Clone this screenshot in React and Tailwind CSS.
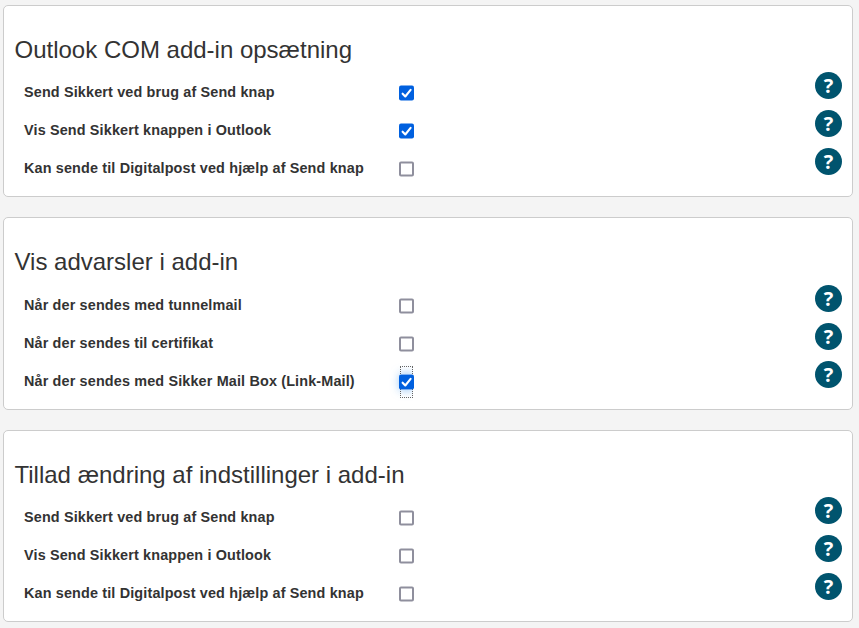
import { useState } from 'react';

const sections = [
  {
    title: 'Outlook COM add-in opsætning',
    cardClass: 'h-[192px]',
    headClass: 'h-[68px]',
    rows: [
      { label: 'Send Sikkert ved brug af Send knap', checked: true },
      { label: 'Vis Send Sikkert knappen i Outlook', checked: true },
      { label: 'Kan sende til Digitalpost ved hjælp af Send knap', checked: false },
    ],
  },
  {
    title: 'Vis advarsler i add-in',
    cardClass: 'h-[193px]',
    headClass: 'h-[69px]',
    rows: [
      { label: 'Når der sendes med tunnelmail', checked: false },
      { label: 'Når der sendes til certifikat', checked: false },
      { label: 'Når der sendes med Sikker Mail Box (Link-Mail)', checked: true, focused: true },
    ],
  },
  {
    title: 'Tillad ændring af indstillinger i add-in',
    cardClass: 'h-[192px]',
    headClass: 'h-[68px]',
    rows: [
      { label: 'Send Sikkert ved brug af Send knap', checked: false },
      { label: 'Vis Send Sikkert knappen i Outlook', checked: false },
      { label: 'Kan sende til Digitalpost ved hjælp af Send knap', checked: false },
    ],
  },
];

function Checkbox({ defaultChecked, focused, label }) {
  const [checked, setChecked] = useState(defaultChecked);

  return (
    <button
      role="checkbox"
      aria-checked={checked}
      aria-label={label}
      onClick={() => setChecked(!checked)}
      className="relative block w-[15px] h-4"
    >
      {focused && (
        <>
          <span className="absolute left-px top-0 w-[13px] h-4 shadow-[0_0_10px_rgba(60,150,240,0.6)] [clip-path:inset(-12px_0_-12px_-12px)]" />
          <span className="absolute left-px -top-2 w-[13px] h-8 border border-dotted border-[#666]" />
        </>
      )}
      {checked ? (
        <svg className="relative block" width="15" height="16" viewBox="0 0 15 16" fill="none">
          <rect y="0.5" width="15" height="15" rx="2" fill="#0060df" />
          <path d="M3.6 8.7L6.3 11.5L11.6 4.9" stroke="white" strokeWidth="2.1" strokeLinecap="round" strokeLinejoin="round" />
        </svg>
      ) : (
        <svg className="relative block" width="15" height="16" viewBox="0 0 15 16" fill="none">
          <rect x="1" y="1.5" width="13" height="13" rx="1" fill="white" stroke="#8f8f9d" strokeWidth="2" />
        </svg>
      )}
    </button>
  );
}

function HelpButton() {
  return (
    <button
      aria-label="Hjælp"
      className="block w-[27px] h-[27px] rounded-full bg-[#00546e] text-white font-['Open_Sans',sans-serif] font-bold text-[20px] leading-[27px] text-center"
    >
      ?
    </button>
  );
}

function Section({ section }) {
  return (
    <section className={`${section.cardClass} bg-white border border-[#cccccc] rounded-[5px]`}>
      {/* Header */}
      <div className={`${section.headClass} pl-[10.5px] pt-7`}>
        <h2 className="text-2xl leading-8 whitespace-nowrap">{section.title}</h2>
      </div>

      {/* Rows */}
      {section.rows.map((row) => (
        <div key={row.label} className="h-[38px] flex items-start pl-5 pr-2.5">
          <div className="w-[375px] pt-2 text-[14.4px] font-bold leading-5 tracking-[0.15px] whitespace-nowrap">
            {row.label}
          </div>
          <div className="pt-[11px]">
            <Checkbox defaultChecked={row.checked} focused={row.focused} label={row.label} />
          </div>
          <div className="ml-auto -mt-0.5">
            <HelpButton />
          </div>
        </div>
      ))}
    </section>
  );
}

export default function App() {
  return (
    <div className="h-[628px] overflow-hidden bg-[#f4f4f4] pt-[5px] pl-[3px] pr-[6px] flex flex-col gap-5 text-[#333333] font-['Liberation_Sans',Arial,sans-serif]">
      {sections.map((section) => (
        <Section key={section.title} section={section} />
      ))}
    </div>
  );
}
